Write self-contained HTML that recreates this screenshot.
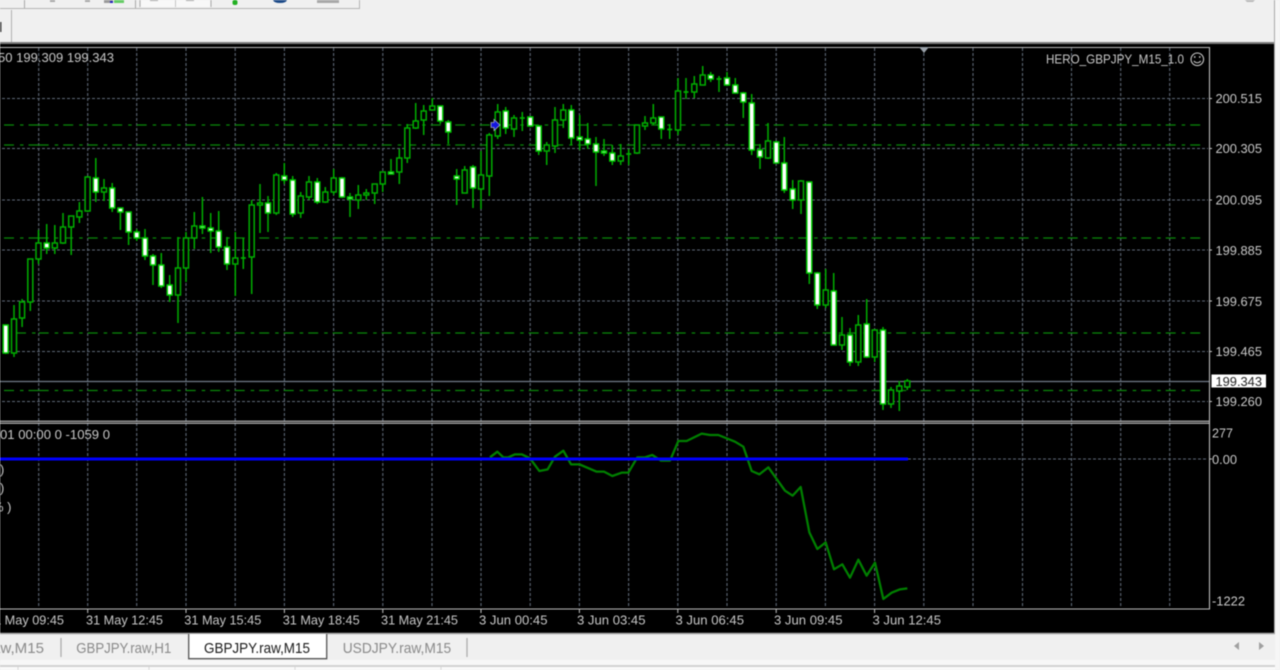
<!DOCTYPE html>
<html><head><meta charset="utf-8"><title>Chart</title>
<style>
html,body{margin:0;padding:0;background:#f0f0f0;width:1280px;height:670px;overflow:hidden}
svg{display:block;position:absolute;left:0;top:0;filter:blur(.4px)}
text{font-family:"Liberation Sans",sans-serif;font-size:13px;fill:#c8c8c8}
.g{stroke:#5f6a78;stroke-width:1.1;stroke-dasharray:3 2;fill:none}
.l{stroke:#0a880a;stroke-width:1.35;stroke-dasharray:10 6 3.5 5;fill:none}
.t text{font-size:14.5px;fill:#8a8a8a}
</style></head><body>
<svg width="1280" height="670" viewBox="0 0 1280 670" xmlns="http://www.w3.org/2000/svg">
<rect width="1280" height="670" fill="#f0f0f0"/>
<!-- toolbar -->
<path d="M0 8.5H359.5V0" fill="none" stroke="#b4b4b4"/>
<path d="M24.5 0V8M135.5 0V8M140 0V7M175 0V7M211 0V7" stroke="#a8a8a8"/>
<rect x="141" y="0" width="69" height="7" fill="#f8f8f8"/>
<path d="M175.5 0V7" stroke="#c4c4c4"/>
<path d="M50 0h5v2h-5zM85 0h5v2h-5zM150 0h8v1h-8zM186 0h8v1h-8zM317 0h22v3h-22z" fill="#a8a8a8"/>
<rect x="104" y="0" width="9" height="3" fill="#9a9a9a"/><rect x="110" y="1" width="3" height="2" fill="#2222bb"/><rect x="114" y="0" width="10" height="3" fill="#66cc66"/>
<rect x="232.500" y="0" width="5" height="5" rx="2" fill="#22b022"/>
<path d="M273 0h14q-1 3-7 3t-7-3z" fill="#1c4a88"/>
<path d="M11.500 10V43" stroke="#b0b0b0"/>
<rect x="0" y="22" width="1.500" height="10" fill="#444"/>
<path d="M1245 0h10l-2 2h-6z" fill="#b8b8b8"/>
<rect x="0" y="42" width="1275" height="2" fill="#7c7c7c"/>
<rect x="0" y="44" width="1274.500" height="589" fill="#000"/>
<path d="M1274.500 0V634" stroke="#a8a8a8"/>
<rect x="1275" y="0" width="5" height="670" fill="#f6f6f6"/>
<!-- grid -->
<path class="g" d="M38.700 48V608M87.700 48V608M136.700 48V608M186 48V608M235.200 48V608M284.400 48V608M333.600 48V608M382.800 48V608M432 48V608M481 48V608M530.200 48V608M579.400 48V608M628.600 48V608M677.800 48V608M727 48V608M776.200 48V608M825.400 48V608M874.600 48V608M923.800 48V608M973 48V608M1022.500 48V608M1071.500 48V608M1120.700 48V608M1169.700 48V608"/>
<path class="g" d="M2 98.500H1208M2 148.500H1208M2 200H1208M2 250H1208M2 301H1208M2 351.500H1208M2 401.500H1208M908 459H1208"/>
<!-- price line -->
<path d="M0 381.500H1209" stroke="#707b88" stroke-width="1.200"/>
<!-- dash-dot levels -->
<path class="l" d="M38.700 125H1204M38.700 145H1204M38.700 238H1204M38.700 333H1204M38.700 390.500H1204"/>
<path class="l" d="M4 125H38.700M4 145H38.700M4 238H38.700M16 333H38.700M4 390.500H38.700"/>
<!-- wicks -->
<path fill="none" stroke="#00ae00" stroke-width="1.500" d="M5.700 325V354M14 305V357M22.100 299V327M30.300 259V311M38.500 230V264M46.700 224V254M54.800 225V254M63 213V244M71.200 216V255M79.400 202V223M87.600 176V212M95.800 158V202M104 179V201M112.200 183V212M120.400 208V230M128.600 212V245M136.700 229V241M145 229V260M153 254V285M161.300 253V288M169.700 275V302M178 237V323M186 232V282M194.300 212V249M202.400 197V234M210.700 213V253M218.700 211V252M227 237V270M235.300 232V296M243.300 238V269M251.700 200V294M260 184V233M268 196V232M276.300 173V215M284.300 163V184M292.700 176V217M300.700 192V218M309 176V200M317.300 178V204M325.300 187V203M333.700 169V195M342 177V198M350 193V217M358.300 185V209M366.300 189V200M374.700 184V204M382.700 172V192M391 159V174M399.300 149V184M407.300 124V163M415.700 103V129M423.700 105V135M432.300 98V110M440.300 106V124M448.300 120V144M456.700 169V205M464.700 166V193M473 165V208M481 151V209M489.300 133V196M497.700 104V139M505.700 107V134M514 115V137M522.300 112V131M530.300 116V127M538.700 125V155M546.700 142V165M555 107V153M563.300 104V128M571.300 105V145M579.700 115V150M587.700 123V149M596 137V186M604 139V156M612.300 145V165M620.700 144V165M628.700 149V165M637 125V154M645 116V130M653.300 104V125M661.300 117V139M669.700 124V139M678 78V135M686 78V99M694.300 76V98M702.700 66V85M710.700 72V82M719 76V92M727 72V85M735.300 78V93M743.300 92V118M751.700 94V155M760 144V169M768 123V159M776.300 141V163M784.300 137V193M792.700 180V209M801 180V214M809.300 182V284M817.300 272V309M825.700 269V308M833.700 273V345M842 317V350M850 328V366M858.300 315V366M866.700 299V358M874.700 329V362M883 327V410M891 387V408M899.300 381V411M907.300 379V390"/>
<!-- hollow bodies -->
<path fill="#000" stroke="#00ae00" stroke-width="1.500" d="M11.500 319h5V353h-5zM19.600 302h5V318h-5zM27.800 259h5V302h-5zM36 243h5V259h-5zM52.300 243h5V248h-5zM60.500 227h5V243h-5zM68.700 216h5V227h-5zM76.900 211h5V217h-5zM85.100 177h5V211h-5zM101.500 188h5V192h-5zM175.500 268h5V295h-5zM183.500 238h5V268h-5zM191.800 226h5V238h-5zM232.800 258h5V264h-5zM249.200 205h5V257h-5zM257.500 203h5V205h-5zM273.800 175h5V213h-5zM298.200 196h5V213h-5zM306.500 182h5V197h-5zM322.800 192h5V202h-5zM331.200 178h5V192h-5zM355.800 195h5V200h-5zM363.800 193h5V195h-5zM372.200 184h5V193h-5zM380.200 172h5V184h-5zM396.800 158h5V172h-5zM404.800 128h5V158h-5zM413.200 121h5V128h-5zM421.200 111h5V120h-5zM429.800 106h5V110h-5zM462.200 170h5V193h-5zM478.500 175h5V189h-5zM486.800 135h5V176h-5zM495.200 112h5V136h-5zM511.500 118h5V129h-5zM544.200 145h5V151h-5zM552.500 120h5V146h-5zM560.800 110h5V120h-5zM618.200 156h5V161h-5zM634.500 125h5V153h-5zM642.500 123h5V126h-5zM650.800 118h5V123h-5zM675.500 91h5V130h-5zM691.800 84h5V92h-5zM700.200 75h5V85h-5zM765.500 141h5V158h-5zM798.500 181h5V200h-5zM823.200 290h5V305h-5zM839.500 335h5V345h-5zM855.800 325h5V362h-5zM872.200 330h5V357h-5zM888.500 390h5V404h-5zM896.800 386h5V391h-5zM904.800 381h5V387h-5z"/>
<path fill="none" stroke="#00ae00" stroke-width="1.800" d="M240.800 258h5M519.800 118h5M626.200 154h5M667.200 129.500h5M683.500 92h5M716.500 79h5"/>
<!-- white bodies -->
<path fill="#fff" stroke="#00cc00" stroke-width="1.500" d="M3.200 325h5V353h-5zM44.200 243h5V248h-5zM93.300 178h5V192h-5zM109.700 188h5V208h-5zM117.900 208h5V212h-5zM126.100 212h5V232h-5zM134.200 232h5V238h-5zM142.500 238h5V256h-5zM150.500 256h5V265h-5zM158.800 265h5V286h-5zM167.200 285h5V295h-5zM199.900 226h5V228h-5zM208.200 228h5V231h-5zM216.200 231h5V247h-5zM224.500 247h5V264h-5zM265.500 203h5V213h-5zM281.800 176h5V180h-5zM290.200 180h5V214h-5zM314.800 182h5V202h-5zM339.500 178h5V197h-5zM347.500 197h5V199h-5zM388.500 172h5V174h-5zM437.800 106h5V121h-5zM445.800 122h5V132h-5zM454.200 176h5V179h-5zM470.500 167h5V188h-5zM503.200 111h5V128h-5zM527.800 117h5V126h-5zM536.200 126h5V151h-5zM568.800 110h5V138h-5zM577.200 137h5V140h-5zM585.200 139h5V144h-5zM593.500 144h5V152h-5zM601.500 151h5V153h-5zM609.800 153h5V161h-5zM658.800 117h5V129h-5zM708.200 75h5V79h-5zM724.500 78h5V85h-5zM732.800 85h5V93h-5zM740.800 93h5V102h-5zM749.200 103h5V150h-5zM757.500 150h5V157h-5zM773.800 142h5V163h-5zM781.800 163h5V190h-5zM790.200 189h5V200h-5zM806.800 182h5V273h-5zM814.800 273h5V305h-5zM831.200 291h5V345h-5zM847.500 335h5V362h-5zM864.200 324h5V357h-5zM880.500 330h5V404h-5z"/>
<!-- blue arrow -->
<path d="M491 122.500h3v-3l6 5.500-6 5.500v-3h-3z" fill="#1414e0" stroke="#a8b0c0" stroke-width=".8"/>
<!-- indicator line -->
<polyline transform="translate(480 425) scale(.33333)" fill="none" stroke="#008000" stroke-width="6.800" stroke-linejoin="round" points="30,97 52,80 70,97 85,97 105,88 125,88 150,100 178,138 203,133 225,95 250,77 273,118 298,118 350,140 372,140 397,153 425,143 445,143 472,97 495,97 517,90 543,107 570,107 595,48 620,48 665,26 690,30 715,30 765,50 790,65 815,138 838,148 865,127 915,197 938,212 962,186 988,322 1012,372 1037,352 1062,433 1087,418 1110,458 1135,404 1160,452 1185,413 1210,522 1235,503 1260,493 1282,490"/>
<path d="M0 459H908" stroke="#0000ff" stroke-width="3"/>
<!-- borders -->
<path d="M0 47.500H1209.500V609H0" fill="none" stroke="#bcbcbc" stroke-width="1.100"/>
<path d="M0 421.200H1209M0 423.200H1209" stroke="#d8d8d8" stroke-width="1"/>
<path d="M919 47h10l-5 6z" fill="#9aa2aa"/>
<path d="M1210 98.500h2M1210 148.500h2M1210 200h2M1210 250h2M1210 301h2M1210 351.500h2M1210 401.500h2M1210 459h2M87.700 609v4M186 609v4M284.400 609v4M382.800 609v4M481 609v4M579.400 609v4M677.800 609v4M776.200 609v4M874.600 609v4" stroke="#c4c4c4"/>
<!-- top text -->
<text x="-2" y="62" textLength="116" lengthAdjust="spacingAndGlyphs">50 199.309 199.343</text>
<text x="1046" y="63.500" textLength="138" lengthAdjust="spacingAndGlyphs">HERO_GBPJPY_M15_1.0</text>
<circle cx="1197.300" cy="59.300" r="6.300" fill="none" stroke="#c8c8c8" stroke-width="1.100"/>
<path d="M1194 57h1.500M1199 57h1.500" stroke="#c8c8c8" stroke-width="1.400"/>
<path d="M1193.800 61q3.500 3.500 7 0" fill="none" stroke="#c8c8c8"/>
<!-- price axis -->
<g>
<text x="1215.500" y="103" textLength="46.500" lengthAdjust="spacingAndGlyphs">200.515</text>
<text x="1215.500" y="153" textLength="46.500" lengthAdjust="spacingAndGlyphs">200.305</text>
<text x="1215.500" y="204.500" textLength="46.500" lengthAdjust="spacingAndGlyphs">200.095</text>
<text x="1215.500" y="255" textLength="46.500" lengthAdjust="spacingAndGlyphs">199.885</text>
<text x="1215.500" y="306" textLength="46.500" lengthAdjust="spacingAndGlyphs">199.675</text>
<text x="1215.500" y="356" textLength="46.500" lengthAdjust="spacingAndGlyphs">199.465</text>
<text x="1215.500" y="406" textLength="46.500" lengthAdjust="spacingAndGlyphs">199.260</text>
</g>
<rect x="1211.500" y="374.500" width="54.500" height="13" fill="#fff"/>
<text x="1215.500" y="386" textLength="46.500" lengthAdjust="spacingAndGlyphs" style="fill:#222">199.343</text>
<text x="1212" y="437.500" textLength="21" lengthAdjust="spacingAndGlyphs">277</text>
<text x="1212" y="464" textLength="25" lengthAdjust="spacingAndGlyphs">0.00</text>
<text x="1212" y="605.500" textLength="33" lengthAdjust="spacingAndGlyphs">-1222</text>
<!-- indicator labels -->
<text x="0" y="439" textLength="110" lengthAdjust="spacingAndGlyphs">01 00:00 0 -1059 0</text>
<text x="0" y="474">)</text>
<text x="0" y="492.500">)</text>
<text x="-8" y="511.500">% )</text>
<!-- time axis -->
<g>
<text x="-13" y="624.500" textLength="77" lengthAdjust="spacingAndGlyphs">31 May 09:45</text>
<text x="86" y="624.500" textLength="77" lengthAdjust="spacingAndGlyphs">31 May 12:45</text>
<text x="184.300" y="624.500" textLength="77" lengthAdjust="spacingAndGlyphs">31 May 15:45</text>
<text x="282.700" y="624.500" textLength="77" lengthAdjust="spacingAndGlyphs">31 May 18:45</text>
<text x="381" y="624.500" textLength="77" lengthAdjust="spacingAndGlyphs">31 May 21:45</text>
<text x="479" y="624.500" textLength="68.500" lengthAdjust="spacingAndGlyphs">3 Jun 00:45</text>
<text x="577" y="624.500" textLength="68.500" lengthAdjust="spacingAndGlyphs">3 Jun 03:45</text>
<text x="675.500" y="624.500" textLength="68.500" lengthAdjust="spacingAndGlyphs">3 Jun 06:45</text>
<text x="774" y="624.500" textLength="68.500" lengthAdjust="spacingAndGlyphs">3 Jun 09:45</text>
<text x="872.500" y="624.500" textLength="68.500" lengthAdjust="spacingAndGlyphs">3 Jun 12:45</text>
</g>
<!-- tab bar -->
<rect x="0" y="633" width="1275" height="37" fill="#f0f0f0"/>
<path d="M0 633.500H1275" stroke="#a4a4a4" stroke-width="1.500"/>
<path d="M61 638V657M467 638V657" stroke="#a8a8a8" stroke-width="1.200"/>
<path d="M188.700 634V658.700H326.700V634" fill="#fff" stroke="#555" stroke-width="1.300"/>
<g class="t">
<text x="-13" y="653" textLength="57" lengthAdjust="spacingAndGlyphs">raw,M15</text>
<text x="76.300" y="653" textLength="95" lengthAdjust="spacingAndGlyphs">GBPJPY.raw,H1</text>
<text x="204" y="653" textLength="106" lengthAdjust="spacingAndGlyphs" style="fill:#1a1a1a">GBPJPY.raw,M15</text>
<text x="342.700" y="653" textLength="108.500" lengthAdjust="spacingAndGlyphs">USDJPY.raw,M15</text>
</g>
<path d="M1239 642v8l-5-4zM1259 642v8l5-4z" fill="#a0a0a0"/>
<rect x="0" y="660" width="1275" height="5" fill="#f7f7f7"/>
<rect x="0" y="665" width="1275" height="2" fill="#d2d2d2"/>
<rect x="0" y="667" width="1275" height="3" fill="#fafafa"/>
<path d="M18 667V670M149 667V670M295 667V670M441 667V670" stroke="#d8d8d8"/>
</svg>
</body></html>
